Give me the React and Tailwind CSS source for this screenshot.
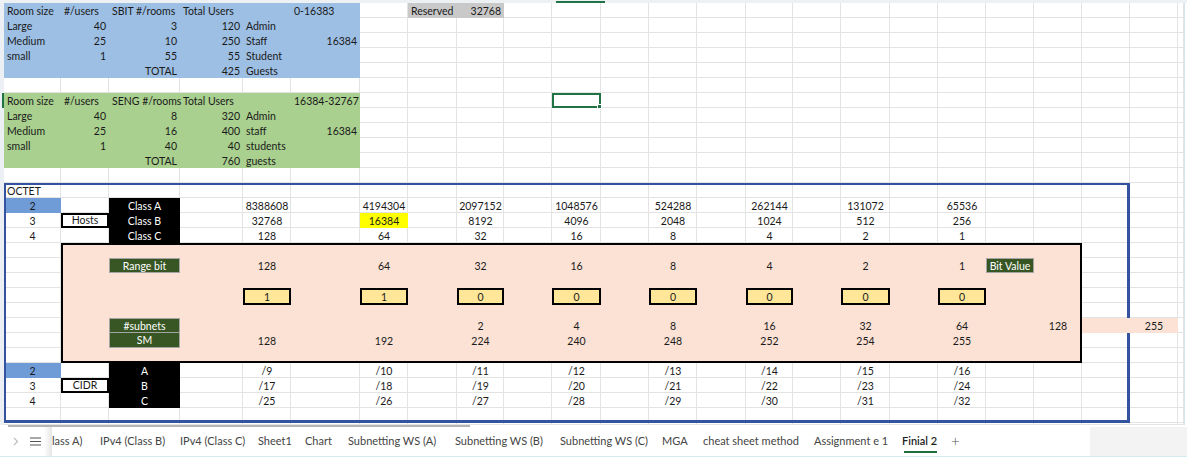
import React from "react";

// column widths copied off the sheet (A..W, then the sliver of X)
const COLS =
  "grid-cols-[57px_48px_71px_63px_48px_69px_48px_49px_47px_48px_49px_48px_48px_49px_47px_48px_49px_48px_48px_48px_48px_48px_48px_6px]";
const ROWS = "grid-rows-[repeat(28,15px)_2px]";

const TOP_COLS = ["col-start-1", "col-start-2", "col-start-3", "col-start-4", "col-start-5", "col-start-6"];
const VAL_COLS = ["col-start-5", "col-start-7", "col-start-9", "col-start-11", "col-start-13", "col-start-15", "col-start-17", "col-start-19"];
const BLUE_ROWS = ["row-start-1", "row-start-2", "row-start-3", "row-start-4", "row-start-5"];
const GREEN_ROWS = ["row-start-7", "row-start-8", "row-start-9", "row-start-10", "row-start-11"];

const sbit = [
  ["Room size", "#/users", "SBIT #/rooms", "Total Users", "", "0-16383"],
  ["Large", "40", "3", "120", "Admin", ""],
  ["Medium", "25", "10", "250", "Staff", "16384"],
  ["small", "1", "55", "55", "Student", ""],
  ["", "", "TOTAL", "425", "Guests", ""],
];

const seng = [
  ["Room size", "#/users", "SENG #/rooms", "Total Users", "", "16384-32767"],
  ["Large", "40", "8", "320", "Admin", ""],
  ["Medium", "25", "16", "400", "staff", "16384"],
  ["small", "1", "40", "40", "students", ""],
  ["", "", "TOTAL", "760", "guests", ""],
];

const valueRows = [
  { row: "row-start-14", values: ["8388608", "4194304", "2097152", "1048576", "524288", "262144", "131072", "65536"] },
  { row: "row-start-15", values: ["32768", "16384", "8192", "4096", "2048", "1024", "512", "256"] },
  { row: "row-start-16", values: ["128", "64", "32", "16", "8", "4", "2", "1"] },
  { row: "row-start-18", values: ["128", "64", "32", "16", "8", "4", "2", "1"] },
  { row: "row-start-22", values: ["", "", "2", "4", "8", "16", "32", "64"] },
  { row: "row-start-23", values: ["128", "192", "224", "240", "248", "252", "254", "255"] },
  { row: "row-start-25", values: ["/9", "/10", "/11", "/12", "/13", "/14", "/15", "/16"] },
  { row: "row-start-26", values: ["/17", "/18", "/19", "/20", "/21", "/22", "/23", "/24"] },
  { row: "row-start-27", values: ["/25", "/26", "/27", "/28", "/29", "/30", "/31", "/32"] },
];

const bits = ["1", "1", "0", "0", "0", "0", "0", "0"];

function Cell({ at, align = "left", className = "", children }) {
  const a = align === "right" ? "text-right pr-[3px]" : align === "center" ? "text-center" : "pl-[3px]";
  return (
    <div className={`${at} ${a} whitespace-nowrap leading-[17px] ${className}`}>{children}</div>
  );
}

function HeaderTable({ data, rows }) {
  return data.map((r, ri) =>
    r.map((v, ci) => {
      if (!v) return null;
      let align = "left";
      if (ri > 0 && (ci === 1 || ci === 2 || ci === 3 || ci === 5)) align = "right";
      return (
        <Cell key={`${ri}-${ci}`} at={`${TOP_COLS[ci]} ${rows[ri]}`} align={align}>
          {v}
        </Cell>
      );
    })
  );
}

function Tab({ w, active, children }) {
  return (
    <div className={`${w} relative flex h-full shrink-0 items-center`}>
      <span className={active ? "font-semibold text-[#1f1f1f]" : ""}>{children}</span>
      {active && <div className="absolute bottom-[3px] left-[2px] h-[2px] w-[33px] bg-[#1e6e3e]" />}
    </div>
  );
}

export default function App() {
  return (
    <div className="flex h-[461px] w-[1187px] flex-col overflow-hidden bg-white font-['Lato',sans-serif] text-[#1a1a1a]">
      {/* column header edge */}
      <div className="flex h-[3px] shrink-0 bg-[#eef1f4]">
        <div className="w-[556px]" />
        <div className="mt-[1px] h-[2px] w-[49px] bg-[#217346]" />
      </div>

      <div className="flex shrink-0">
        {/* row header edge */}
        <div className="flex w-[4px] flex-col bg-[#eceff3]">
          <div className="h-[90px]" />
          <div className="ml-[2px] h-[15px] w-[2px] bg-[#217346]" />
        </div>

        <div className="grid text-[10.5px]">
          {/* gridlines */}
          <div className={`col-start-1 row-start-1 grid ${COLS} ${ROWS}`}>
            {Array.from({ length: 29 * 24 }).map((_, i) => (
              <div key={i} className="border-r border-b border-[#e3e3e3]" />
            ))}
          </div>

          {/* content */}
          <div className={`col-start-1 row-start-1 grid ${COLS} ${ROWS}`}>
            <div className="col-start-1 col-end-7 row-start-1 row-end-6 bg-[#9dbfe4]" />
            <div className="col-start-1 col-end-7 row-start-7 row-end-12 bg-[#a9d08e]" />
            <div className="col-start-8 col-end-10 row-start-1 bg-[#c9c9c9]" />

            <HeaderTable data={sbit} rows={BLUE_ROWS} />
            <HeaderTable data={seng} rows={GREEN_ROWS} />
            <Cell at="col-start-8 row-start-1">Reserved</Cell>
            <Cell at="col-start-9 row-start-1" align="right">32768</Cell>

            {/* selected cell */}
            <div className="relative col-start-11 row-start-7 border-2 border-[#217346]">
              <div className="absolute -right-[3px] -bottom-[3px] h-[5px] w-[5px] border border-white bg-[#217346]" />
            </div>

            {/* subnet range box */}
            <div className="col-start-2 col-end-22 row-start-17 row-end-25 border-2 border-black bg-[#fbe2d5]" />

            <Cell at="col-start-1 row-start-13">OCTET</Cell>
            <Cell at="col-start-1 row-start-14" align="center" className="bg-[#6f9bd6]">2</Cell>
            <Cell at="col-start-1 row-start-15" align="center">3</Cell>
            <Cell at="col-start-1 row-start-16" align="center">4</Cell>
            <Cell at="col-start-1 row-start-25" align="center" className="bg-[#6f9bd6]">2</Cell>
            <Cell at="col-start-1 row-start-26" align="center">3</Cell>
            <Cell at="col-start-1 row-start-27" align="center">4</Cell>

            <div className="col-start-2 row-start-15 border-2 border-black text-center leading-[11px]">Hosts</div>
            <div className="col-start-2 row-start-26 border-2 border-black text-center leading-[11px]">CIDR</div>

            <Cell at="col-start-3 row-start-14" align="center" className="bg-black text-white">Class A</Cell>
            <Cell at="col-start-3 row-start-15" align="center" className="bg-black text-white">Class B</Cell>
            <Cell at="col-start-3 row-start-16" align="center" className="bg-black text-white">Class C</Cell>
            <Cell at="col-start-3 row-start-25" align="center" className="bg-black text-white">A</Cell>
            <Cell at="col-start-3 row-start-26" align="center" className="bg-black text-white">B</Cell>
            <Cell at="col-start-3 row-start-27" align="center" className="bg-black text-white">C</Cell>

            <div className="col-start-3 row-start-18 border border-[#a5a5a5] bg-[#375623] text-center leading-[14px] text-white">Range bit</div>
            <div className="col-start-3 row-start-22 border border-[#a5a5a5] bg-[#375623] text-center leading-[14px] text-white">#subnets</div>
            <div className="col-start-3 row-start-23 border border-t-0 border-[#a5a5a5] bg-[#375623] text-center leading-[15px] text-white">SM</div>
            <div className="col-start-20 row-start-18 border border-[#a5a5a5] bg-[#375623] text-center leading-[14px] text-white">Bit Value</div>

            <div className="col-start-7 row-start-15 bg-[#ffff00]" />

            {valueRows.map((r) =>
              r.values.map((v, i) =>
                v ? (
                  <Cell key={`${r.row}-${i}`} at={`${VAL_COLS[i]} ${r.row}`} align="center">
                    {v}
                  </Cell>
                ) : null
              )
            )}
            <Cell at="col-start-21 row-start-22" align="center">128</Cell>

            {bits.map((b, i) => (
              <div
                key={i}
                className={`${VAL_COLS[i]} row-start-20 h-[17px] border-2 border-black bg-[#ffe699] text-center leading-[14px]`}
              >
                {b}
              </div>
            ))}

            {/* octet frame */}
            <div className="pointer-events-none col-start-1 col-end-23 row-start-13 row-end-29 border-2 border-r-[3px] border-b-[3px] border-[#34539f]" />

            {/* stray fill past the frame */}
            <div className="col-start-22 col-end-24 row-start-22 bg-[#fbe2d5]" />
            <Cell at="col-start-23 row-start-22" align="center">255</Cell>
          </div>
        </div>

        <div className="w-[3px] border-l border-[#d7e6ee]" />
      </div>

      {/* sheet tabs */}
      <div className="flex h-[31px] shrink-0 flex-col">
        <div className="flex h-[2px]">
          <div className="ml-[8px] h-[2px] w-[462px] bg-[#b5b5b5]" />
        </div>
        <div className="flex h-[29px] items-center text-[11px] text-[#444]">
          <div className="flex w-[30px] justify-center pl-[2px]">
            <svg width="6" height="9" viewBox="0 0 6 9" fill="none" stroke="#bdbdbd" strokeWidth="1.2">
              <path d="M1 1l3.5 3.5L1 8" />
            </svg>
          </div>
          <div className="flex w-[14px] items-center">
            <svg width="11" height="9" viewBox="0 0 11 9" stroke="#555" strokeWidth="1.2">
              <path d="M0 1h11M0 4.5h11M0 8h11" />
            </svg>
          </div>
          <div className="flex h-full items-center">
            <div className="h-full w-[8px] bg-gradient-to-r from-white to-[#e6e6e6]" />
            <Tab w="w-[48px]">lass A)</Tab>
            <Tab w="w-[80px]">IPv4 (Class B)</Tab>
            <Tab w="w-[78px]">IPv4 (Class C)</Tab>
            <Tab w="w-[47px]">Sheet1</Tab>
            <Tab w="w-[43px]">Chart</Tab>
            <Tab w="w-[107px]">Subnetting WS (A)</Tab>
            <Tab w="w-[105px]">Subnetting WS (B)</Tab>
            <Tab w="w-[102px]">Subnetting WS (C)</Tab>
            <Tab w="w-[41px]">MGA</Tab>
            <Tab w="w-[111px]">cheat sheet method</Tab>
            <Tab w="w-[88px]">Assignment e 1</Tab>
            <Tab w="w-[49px]" active>Finial 2</Tab>
            <span className="text-[15px] font-light text-[#555]">+</span>
          </div>
          <div className="flex-1" />
          <div className="h-full w-[97px] bg-[#f3f3f3]" />
        </div>
      </div>
      <div className="h-[1px] shrink-0 bg-[#d6eaf1]" />
      <div className="flex-1 bg-white" />
    </div>
  );
}
